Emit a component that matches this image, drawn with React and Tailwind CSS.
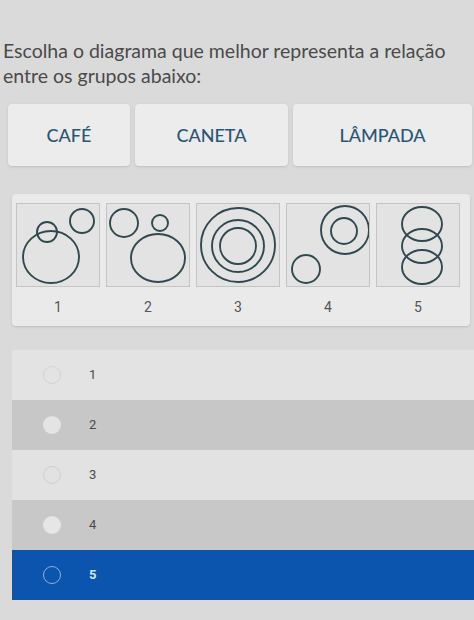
import React from "react";

const S = "#30494f";

function Box({ children }) {
  return (
    <div className="w-[84px] h-[84px] bg-[#e3e3e3] border border-[#c4c4c4]">
      <svg width="82" height="82" viewBox="0 0 82 82" fill="none" stroke={S} strokeWidth="1.9">
        {children}
      </svg>
    </div>
  );
}

const diagrams = [
  <>
    <ellipse cx="34" cy="53" rx="28" ry="26" />
    <circle cx="30" cy="28" r="10" />
    <circle cx="65" cy="17" r="12" />
  </>,
  <>
    <circle cx="17" cy="19" r="14" />
    <circle cx="53" cy="19" r="8" />
    <ellipse cx="51" cy="54" rx="27" ry="24" />
  </>,
  <>
    <circle cx="41" cy="41" r="37" />
    <circle cx="41" cy="42" r="26" />
    <circle cx="41" cy="42" r="18" />
  </>,
  <>
    <circle cx="58" cy="26" r="24" />
    <circle cx="57" cy="27" r="13" />
    <circle cx="19" cy="65" r="14" />
  </>,
  <>
    <ellipse cx="45" cy="20" rx="20" ry="17" />
    <ellipse cx="45" cy="42" rx="20" ry="17" />
    <ellipse cx="45" cy="63" rx="20" ry="17" />
  </>,
];

const rows = [
  { n: "1", bg: "bg-[#e3e3e3]", radio: "border border-[#d2d2d2] bg-[#e3e3e3]", txt: "text-[#4a4a4a]" },
  { n: "2", bg: "bg-[#c7c7c7]", radio: "bg-[#e4e4e4]", txt: "text-[#4a4a4a]" },
  { n: "3", bg: "bg-[#e2e2e2]", radio: "border border-[#d0d0d0] bg-[#e2e2e2]", txt: "text-[#4a4a4a]" },
  { n: "4", bg: "bg-[#c8c8c8]", radio: "bg-[#e6e6e6]", txt: "text-[#4a4a4a]" },
  { n: "5", bg: "bg-[#0b55ae]", radio: "border border-[#8fb0d8] bg-[#0b55ae]", txt: "text-[#d5e2f3] font-bold" },
];

export default function App() {
  return (
    <div className="w-[474px] h-[620px] bg-[#dadada] overflow-hidden font-['Lato','Noto_Sans',sans-serif]">
      <div className="pt-[38px] pl-[3px] pr-[10px] text-[19.5px] leading-[25px] text-[#4a4a4a]">
        Escolha o diagrama que melhor representa a relação
        <br />
        entre os grupos abaixo:
      </div>

      <div className="mt-[16px] ml-[8px] flex gap-[5px]">
        <div className="w-[122px] h-[62px] rounded bg-[#ececec] shadow-sm flex items-center justify-center text-[18px] font-medium text-[#2a5674]">CAFÉ</div>
        <div className="w-[153px] h-[62px] rounded bg-[#ececec] shadow-sm flex items-center justify-center text-[18px] font-medium text-[#2a5674]">CANETA</div>
        <div className="w-[179px] h-[62px] rounded bg-[#ececec] shadow-sm flex items-center justify-center text-[18px] font-medium text-[#2a5674]">LÂMPADA</div>
      </div>

      <div className="mt-[28px] ml-[12px] w-[458px] h-[132px] bg-[#eaeaea] shadow rounded-sm pt-[9px] pl-[4px]">
        <div className="flex gap-[6px]">
          {diagrams.map((d, i) => (
            <div key={i} className="flex flex-col items-center">
              <Box>{d}</Box>
              <div className="mt-[12px] text-[14px] leading-[16px] text-[#555] font-['Roboto',sans-serif]">{i + 1}</div>
            </div>
          ))}
        </div>
      </div>

      <div className="mt-[24px] ml-[12px]">
        {rows.map((r) => (
          <div key={r.n} className={`h-[50px] flex items-center ${r.bg}`}>
            <div className={`ml-[31px] w-[18px] h-[18px] rounded-full ${r.radio}`} />
            <div className={`ml-[28px] text-[13px] font-['Roboto',sans-serif] ${r.txt}`}>{r.n}</div>
          </div>
        ))}
      </div>
    </div>
  );
}
